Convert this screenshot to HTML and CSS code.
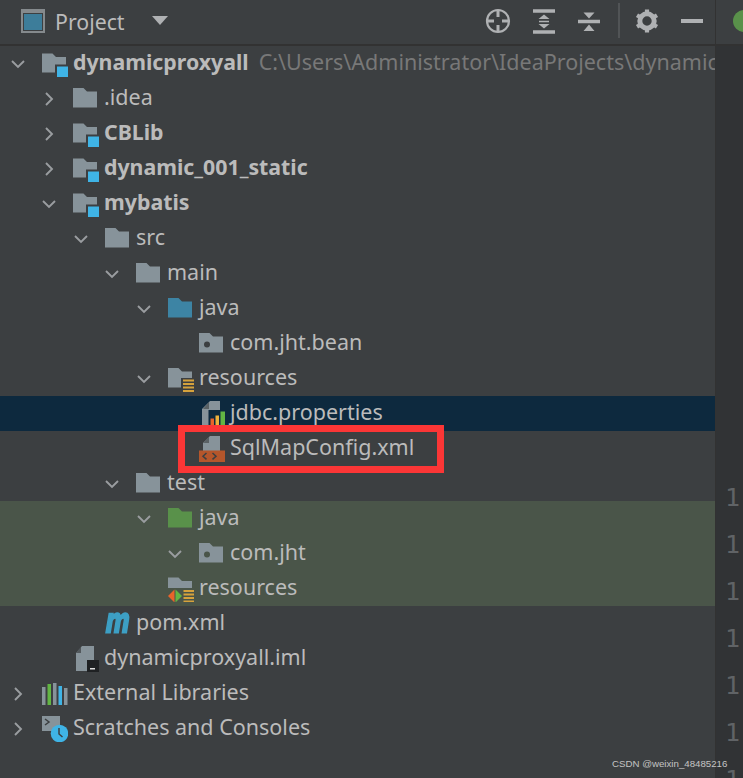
FILE: index.html
```html
<!DOCTYPE html>
<html lang="en">
<head>
<meta charset="utf-8">
<title>Project</title>
<link rel="stylesheet" href="styles.css">
</head>
<body>
<svg class="defs" width="0" height="0" aria-hidden="true">
  <defs>
    <symbol id="chev-down" viewBox="0 0 16 16"><path d="M2 5l6 6 6-6" fill="none" stroke="#9a9da0" stroke-width="1.9"/></symbol>
    <symbol id="chev-right" viewBox="0 0 16 16"><path d="M5 2l6 6-6 6" fill="none" stroke="#9a9da0" stroke-width="1.9"/></symbol>
    <symbol id="folder" viewBox="0 0 26 26"><path d="M0 2h10.500l3.500 3.500h10v16h-24z" fill="#87939a"/></symbol>
    <symbol id="module" viewBox="0 0 26 26"><path d="M0 2.500h10.500l3.500 3.500h10v15.500h-24z" fill="#87939a"/><rect x="13" y="13.500" width="13" height="13" fill="#3c3f41"/><rect x="15" y="15.500" width="11" height="11" fill="#3fb4e6"/></symbol>
    <symbol id="src-blue" viewBox="0 0 26 26"><path d="M0 2h10.500l3.500 3.500h10v16h-24z" fill="#3d84a4"/></symbol>
    <symbol id="src-green" viewBox="0 0 26 26"><path d="M0 2h10.500l3.500 3.500h10v16h-24z" fill="#59914a"/></symbol>
    <symbol id="package" viewBox="0 0 26 26"><path d="M0 2h10.500l3.500 3.500h10v16h-24z" fill="#87939a"/><circle cx="8" cy="13.500" r="3" fill="#3c3f41"/></symbol>
    <symbol id="package-g" viewBox="0 0 26 26"><path d="M0 2h10.500l3.500 3.500h10v16h-24z" fill="#87939a"/><circle cx="8" cy="13.500" r="3" fill="#4a5549"/></symbol>
    <symbol id="resources" viewBox="0 0 26 26"><path d="M0 2h10.500l3.500 3.500h10v16h-24z" fill="#87939a"/><rect x="13" y="12" width="13" height="14" fill="#3c3f41"/><path d="M15 14.500h11M15 18h11M15 21.500h11M15 25h11" stroke="#d6a23c" stroke-width="2"/></symbol>
    <symbol id="res-test" viewBox="0 0 26 26"><path d="M0 1.500h10.500l3.500 3.500h10v9h-24z" fill="#87939a"/><rect x="0" y="12" width="26" height="14" fill="#4a5549"/><path d="M6.500 13.500v13l-6.500-6.500z" fill="#e8642a"/><path d="M7.500 13.500v13l6.500-6.500z" fill="#62b543"/><path d="M15.500 15h10.500M15.500 18.500h10.500M15.500 22h10.500M15.500 25.500h10.500" stroke="#d6a23c" stroke-width="2"/></symbol>
    <symbol id="props" viewBox="0 0 26 26"><path d="M11 0h10v24h-18v-16z" fill="#87939a"/><path d="M10 1v7h-6z" fill="#3c3f41" opacity=".6"/><rect x="9.500" y="9" width="17" height="17" fill="#0d293e"/><rect x="11.500" y="17.500" width="3.500" height="8" fill="#e8642a"/><rect x="16.500" y="14.500" width="3.500" height="11" fill="#edb23c"/><rect x="21.500" y="10.500" width="4.500" height="15" fill="#62b543"/></symbol>
    <symbol id="xml" viewBox="0 0 26 26"><path d="M11 0h10v15h-17v-8z" fill="#87939a"/><path d="M10 1v6h-5.500z" fill="#3c3f41" opacity=".6"/><rect x="0" y="14.500" width="26" height="11.500" fill="#b5562b"/><path d="M7.500 17l-3.500 3.200 3.500 3.200M13.500 17l3.500 3.200-3.500 3.200" fill="none" stroke="#3c3f41" stroke-width="1.500"/></symbol>
    <symbol id="maven" viewBox="0 0 26 26"><g transform="translate(0 -6.800) scale(1 1.350)"><path d="M1 21l3.200-14h3.800l-.5 2.200c1.500-1.700 3.100-2.600 4.800-2.600 1.600 0 2.800.8 3.100 2.700 1.500-1.800 3.200-2.700 5-2.700 2.500 0 3.700 1.700 3.100 4.500l-2.100 9.900h-4l1.900-8.700c.3-1.500-.1-2.300-1.100-2.300-1 0-2.100.8-2.900 2l-2 9h-4l1.900-8.700c.3-1.500-.1-2.300-1.100-2.300-1 0-2.100.8-2.900 2l-2 9z" fill="#3d9fc4" stroke="#3d9fc4" stroke-width="1.400"/></g></symbol>
    <symbol id="iml" viewBox="0 0 26 26"><path d="M9 0h12v25h-18v-18z" fill="#87939a"/><path d="M8 1v6h-5z" fill="#3c3f41" opacity=".7"/><rect x="14" y="14" width="12" height="12" fill="#1f2123"/><rect x="17" y="22" width="5" height="1.500" fill="#ddd"/></symbol>
    <symbol id="libs" viewBox="0 0 26 26"><rect x="0" y="6" width="3.500" height="18" fill="#87939a"/><rect x="5.500" y="3" width="3.500" height="21" fill="#62b543"/><rect x="11" y="2" width="3.500" height="22" fill="#87939a"/><rect x="16.500" y="5" width="3.500" height="19" fill="#3fb4e6"/><rect x="22" y="7" width="3.500" height="17" fill="#87939a"/></symbol>
    <symbol id="scratch" viewBox="0 0 26 26"><path d="M0 0h18v15h-18z" fill="#87939a"/><path d="M3 3l4 3-4 3" fill="none" stroke="#3c3f41" stroke-width="1.500"/><circle cx="17.500" cy="17.500" r="8.800" fill="#3fb4e6"/><path d="M17 12v6l3.500 3" fill="none" stroke="#3c3f41" stroke-width="1.500"/></symbol>
  </defs>
</svg>

<div class="app">
  <main class="panel">
    <header class="toolbar">
      <svg class="win-icon" width="24" height="24" viewBox="0 0 24 24"><rect x="0" y="0" width="24" height="24" fill="#858a8d"/><rect x="2" y="4" width="20" height="18" fill="#3c3f41"/><rect x="3" y="5" width="18" height="16" fill="#3d7d9a"/></svg>
      <span class="title">Project</span>
      <span class="caret"></span>
      <div class="actions">
        <svg class="act" width="26" height="26" viewBox="0 0 26 26"><circle cx="13" cy="13" r="11" fill="none" stroke="#afb1b3" stroke-width="2.200"/><path d="M13 2v7M13 17v7M2 13h7M17 13h7" stroke="#afb1b3" stroke-width="3"/></svg>
        <svg class="act" width="24" height="26" viewBox="0 0 24 26"><path d="M1 3h22M1 24h22" stroke="#afb1b3" stroke-width="3.500"/><path d="M12 6.500l5.500 4.500h-11zM12 20.500l5.500-4.500h-11z" fill="#afb1b3"/><path d="M7 13.500h10" stroke="#afb1b3" stroke-width="1.500"/></svg>
        <svg class="act" width="24" height="26" viewBox="0 0 24 26"><path d="M1 13.500h22" stroke="#afb1b3" stroke-width="3.500"/><path d="M12 10.500l-5.500-6h11zM12 16.500l-5.500 6.500h11z" fill="#afb1b3"/></svg>
        <span class="sep"></span>
        <svg class="gear" width="24" height="24" viewBox="0 0 24 24"><circle cx="12" cy="12" r="7.200" fill="none" stroke="#afb1b3" stroke-width="5"/><path d="M12 0.500v5M12 18.500v5M2 6.200l4.300 2.500M17.700 15.300l4.300 2.500M2 17.800l4.300-2.500M17.700 8.700l4.300-2.500" stroke="#afb1b3" stroke-width="4.200"/></svg>
        <span class="minimize"></span>
      </div>
    </header>
    <div class="tree">
      <div class="row d0"><svg class="chev"><use href="#chev-down"/></svg><svg class="ico"><use href="#module"/></svg><b>dynamicproxyall</b><span class="path">C:\Users\Administrator\IdeaProjects\dynamic</span></div>
      <div class="row d1"><svg class="chev"><use href="#chev-right"/></svg><svg class="ico"><use href="#folder"/></svg><span>.idea</span></div>
      <div class="row d1"><svg class="chev"><use href="#chev-right"/></svg><svg class="ico"><use href="#module"/></svg><b>CBLib</b></div>
      <div class="row d1"><svg class="chev"><use href="#chev-right"/></svg><svg class="ico"><use href="#module"/></svg><b>dynamic_001_static</b></div>
      <div class="row d1"><svg class="chev"><use href="#chev-down"/></svg><svg class="ico"><use href="#module"/></svg><b>mybatis</b></div>
      <div class="row d2"><svg class="chev"><use href="#chev-down"/></svg><svg class="ico"><use href="#folder"/></svg><span>src</span></div>
      <div class="row d3"><svg class="chev"><use href="#chev-down"/></svg><svg class="ico"><use href="#folder"/></svg><span>main</span></div>
      <div class="row d4"><svg class="chev"><use href="#chev-down"/></svg><svg class="ico"><use href="#src-blue"/></svg><span>java</span></div>
      <div class="row d5"><i class="chev"></i><svg class="ico"><use href="#package"/></svg><span>com.jht.bean</span></div>
      <div class="row d4"><svg class="chev"><use href="#chev-down"/></svg><svg class="ico"><use href="#resources"/></svg><span>resources</span></div>
      <div class="row d5 selected"><i class="chev"></i><svg class="ico"><use href="#props"/></svg><span>jdbc.properties</span></div>
      <div class="row d5"><i class="chev"></i><svg class="ico"><use href="#xml"/></svg><span>SqlMapConfig.xml</span></div>
      <div class="row d3"><svg class="chev"><use href="#chev-down"/></svg><svg class="ico"><use href="#folder"/></svg><span>test</span></div>
      <div class="row d4 tested"><svg class="chev"><use href="#chev-down"/></svg><svg class="ico"><use href="#src-green"/></svg><span>java</span></div>
      <div class="row d5 tested"><svg class="chev"><use href="#chev-down"/></svg><svg class="ico"><use href="#package-g"/></svg><span>com.jht</span></div>
      <div class="row d4 tested"><i class="chev"></i><svg class="ico"><use href="#res-test"/></svg><span>resources</span></div>
      <div class="row d2"><i class="chev"></i><svg class="ico"><use href="#maven"/></svg><span>pom.xml</span></div>
      <div class="row d1"><i class="chev"></i><svg class="ico"><use href="#iml"/></svg><span>dynamicproxyall.iml</span></div>
      <div class="row d0"><svg class="chev"><use href="#chev-right"/></svg><svg class="ico"><use href="#libs"/></svg><span>External Libraries</span></div>
      <div class="row d0"><svg class="chev"><use href="#chev-right"/></svg><svg class="ico"><use href="#scratch"/></svg><span>Scratches and Consoles</span></div>
    </div>
  </main>
  <aside class="side">
    <div class="side-top"><span class="dot"></span></div>
    <div class="gutter">
      <span>1</span><span>1</span><span>1</span><span>1</span><span>1</span><span>1</span><span>1</span>
    </div>
  </aside>
</div>
<div class="callout"></div>
<div class="watermark">CSDN @weixin_48485216</div>
</body>
</html>
```
FILE: styles.css
```css
* { box-sizing: border-box; }
html, body { margin: 0; height: 100%; overflow: hidden; }
body {
  position: relative;
  width: 743px;
  height: 778px;
  background: #3c3f41;
  font-family: "Noto Sans", "Open Sans", sans-serif;
  color: #bbbbbb;
}
.defs { position: absolute; }
.app { display: flex; height: 778px; }
.panel { width: 715px; flex: none; overflow: hidden; }
.toolbar {
  display: flex;
  align-items: center;
  height: 46px;
  padding: 0 0 3px 21px;
  border-bottom: 2px solid #323232;
}
.title { margin: 2px 0 0 10px; font-size: 21.3px; color: #bbbbbb; }
.caret {
  margin-left: 27px;
  width: 0;
  height: 0;
  border-left: 8px solid transparent;
  border-right: 8px solid transparent;
  border-top: 9px solid #afb1b3;
}
.actions { margin-left: auto; display: flex; align-items: center; padding-right: 12px; }
.act { margin-left: 21px; }
.sep { width: 2px; height: 35px; margin: 0 15px 0 17px; background: #515456; }
.minimize { width: 22px; height: 4px; margin-left: 22px; background: #afb1b3; }
.tree { display: flex; flex-direction: column; }
.row {
  display: flex;
  align-items: center;
  height: 35px;
  white-space: nowrap;
  font-size: 21.5px;
}
.row b, .row span { line-height: 31px; margin-bottom: 4px; }
.row b { font-weight: 700; font-size: 21.3px; }
.chev { width: 16px; height: 16px; margin: 0 16px 0 10px; flex: none; display: block; }
.ico { width: 26px; height: 26px; margin-right: 5px; flex: none; }
.row .path { margin-left: 10px; color: #787878; }
.d0 { padding-left: 0; }
.d1 { padding-left: 31px; }
.d2 { padding-left: 63px; }
.d3 { padding-left: 94px; }
.d4 { padding-left: 126px; }
.d5 { padding-left: 157px; }
.selected { background: #0d293e; }
.tested { background: #4a5549; }
.side { flex: 1; display: flex; flex-direction: column; overflow: hidden; border-left: 1px solid #323232; }
.side-top { position: relative; height: 46px; flex: none; border-bottom: 2px solid #323232; }
.dot { position: absolute; left: 17px; top: 10px; width: 22px; height: 22px; border-radius: 50%; background: #59914a; }
.gutter {
  flex: 1;
  background: #313335;
  display: flex;
  flex-direction: column;
  padding: 428px 0 0 9px;
  font-family: "DejaVu Sans Mono", monospace;
  font-size: 25px;
  line-height: 47px;
  color: #606366;
}
.callout {
  position: absolute;
  left: 178px;
  top: 425px;
  width: 266px;
  height: 48px;
  border: 7px solid #fb3636;
}
.watermark {
  position: absolute;
  left: 612px;
  top: 757px;
  font-family: "Liberation Sans", sans-serif;
  font-size: 9.7px;
  line-height: 13px;
  white-space: nowrap;
  color: #c4c4c4;
}
```
